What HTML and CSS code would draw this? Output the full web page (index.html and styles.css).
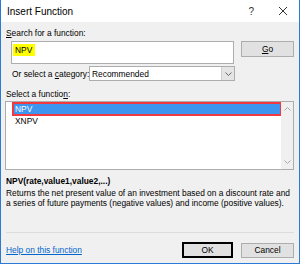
FILE: index.html
```html
<!DOCTYPE html>
<html lang="en">
<head>
    <meta charset="UTF-8">
    <title>Insert Function</title>
    <link rel="stylesheet" href="styles.css">
</head>
<body>
    <div class="window">
        <div class="titlebar">
            <span class="title">Insert Function</span>
            <span class="help">?</span>
            <span class="close">
                <svg width="10" height="10" viewBox="0 0 10 10"><path d="M1 1L9 9M9 1L1 9" stroke="#333" stroke-width="1"/></svg>
            </span>
        </div>
        <div class="content">
            <div class="label"><u>S</u>earch for a function:</div>
            <div class="search-row">
                <div class="search-box"><span class="mark">NPV</span></div>
                <button class="btn go"><u>G</u>o</button>
            </div>
            <div class="category-row">
                <span class="cat-label">Or select a <u>c</u>ategory:</span>
                <div class="select">
                    <span class="select-text">Recommended</span>
                    <span class="select-arrow">
                        <svg width="7" height="4" viewBox="0 0 7 4"><path d="M0.5 0.5L3.5 3.5L6.5 0.5" fill="none" stroke="#666" stroke-width="1"/></svg>
                    </span>
                </div>
            </div>
            <div class="label">Select a functio<u>n</u>:</div>
            <div class="listbox">
                <div class="items">
                    <div class="item selected">NPV</div>
                    <div class="item">XNPV</div>
                </div>
                <div class="scrollbar">
                    <svg width="7" height="4" viewBox="0 0 7 4"><path d="M0.5 3.5L3.5 0.5L6.5 3.5" fill="none" stroke="#aaa" stroke-width="1"/></svg>
                    <svg width="7" height="4" viewBox="0 0 7 4"><path d="M0.5 0.5L3.5 3.5L6.5 0.5" fill="none" stroke="#aaa" stroke-width="1"/></svg>
                </div>
            </div>
            <div class="syntax">NPV(rate,value1,value2,...)</div>
            <div class="desc">
                <div>Returns the net present value of an investment based on a discount rate and</div>
                <div>a series of future payments (negative values) and income (positive values).</div>
            </div>
            <div class="separator"></div>
            <div class="footer">
                <a class="help-link" href="#">Help on this function</a>
                <button class="btn ok">OK</button>
                <button class="btn cancel">Cancel</button>
            </div>
        </div>
    </div>
</body>
</html>
```

FILE: styles.css
```css
body {
    margin: 0;
    font-family: "Liberation Sans", Arial, sans-serif;
    font-size: 8.4px;
    color: #000;
}

.window {
    width: 300px;
    height: 264px;
    box-sizing: border-box;
    border: 1px solid #2b7bd6;
    border-top: none;
    background-color: #f0f0f0;
    display: flex;
    flex-direction: column;
    overflow: hidden;
    white-space: nowrap;
}

.titlebar {
    height: 22px;
    background-color: #fff;
    display: flex;
    align-items: center;
    flex-shrink: 0;
}

.title {
    font-size: 10px;
    margin-left: 6px;
    flex: 1;
}

.help {
    font-size: 10px;
    margin-right: 24px;
    color: #333;
}

.close {
    display: flex;
    margin-right: 11px;
}

.content {
    padding: 4px 5px 0 4px;
    display: flex;
    flex-direction: column;
}

.label {
    line-height: 12px;
    margin-top: 1px;
    padding-left: 1px;
}

.search-row {
    display: flex;
    align-items: flex-start;
    margin-top: 2px;
    padding-left: 6px;
}

.search-box {
    width: 223px;
    height: 23px;
    box-sizing: border-box;
    border: 1px solid #adadad;
    background-color: #fff;
    padding: 2px 1px;
}

.mark {
    background-color: #ffff00;
    display: inline-block;
    width: 22px;
    height: 12px;
    line-height: 12px;
    padding-left: 2px;
    box-sizing: border-box;
}

.btn {
    font-family: inherit;
    font-size: 8.4px;
    background-color: #e1e1e1;
    border: 1px solid #adadad;
    height: 16px;
    padding: 0;
    color: #000;
}

.go {
    width: 53px;
    margin-left: 7px;
}

.category-row {
    display: flex;
    align-items: center;
    margin-top: 2px;
    padding-left: 7px;
}

.cat-label {
    width: 77px;
}

.select {
    width: 146px;
    height: 15px;
    box-sizing: border-box;
    border: 1px solid #adadad;
    background-color: #fff;
    display: flex;
    align-items: center;
}

.select-text {
    flex: 1;
    padding-left: 2px;
}

.select-arrow {
    width: 12px;
    height: 13px;
    background-color: #e5e5e5;
    border-left: 1px solid #cfcfcf;
    display: flex;
    align-items: center;
    justify-content: center;
}

.category-row + .label {
    margin-top: 7px;
}

.listbox {
    margin-top: 1px;
    height: 69px;
    box-sizing: border-box;
    border: 1px solid #adadad;
    background-color: #fff;
    display: flex;
}

.items {
    flex: 1;
    padding: 1px 0 0 7px;
}

.item {
    height: 11px;
    line-height: 11px;
    padding-left: 2px;
}

.item.selected {
    background-color: #3d95f0;
    color: #fff;
    outline: 2px solid #f2393f;
    outline-offset: -1px;
    height: 12px;
    line-height: 12px;
    margin-bottom: 1px;
}

.scrollbar {
    width: 12px;
    background-color: #f0f0f0;
    display: flex;
    flex-direction: column;
    justify-content: space-between;
    align-items: center;
    padding: 5px 0;
    box-sizing: border-box;
}

.syntax {
    font-weight: bold;
    margin-top: 5px;
    padding-left: 1px;
    line-height: 12px;
}

.desc {
    padding-left: 1px;
    line-height: 10px;
    margin-top: 1px;
}

.separator {
    height: 1px;
    background-color: #dcdcdc;
    margin-top: 24px;
    margin-left: 1px;
}

.footer {
    display: flex;
    align-items: center;
    margin-top: 9px;
}

.help-link {
    color: #0066cc;
    flex: 1;
    padding-left: 1px;
}

.ok {
    width: 51px;
    border: 2px solid #000;
}

.cancel {
    width: 53px;
    margin-left: 8px;
    height: 15px;
}
```
